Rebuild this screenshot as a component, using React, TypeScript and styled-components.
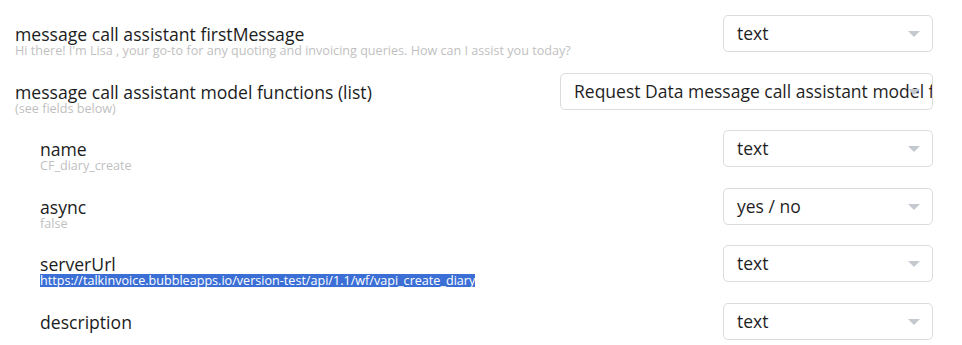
import React from 'react';
import styled, { createGlobalStyle } from 'styled-components';

const GlobalStyle = createGlobalStyle`
  body {
    margin: 0;
    background: #ffffff;
    font-family: 'Open Sans', 'Noto Sans', sans-serif;
    color: #1f1f1f;
  }
`;

interface Field {
  label: string;
  hint?: string;
  value: string;
  wide?: boolean;
  nested?: boolean;
  selected?: boolean;
}

const fields: Field[] = [
  {
    label: 'message call assistant firstMessage',
    hint: "Hi there! I'm Lisa , your go-to for any quoting and invoicing queries. How can I assist you today?",
    value: 'text',
  },
  {
    label: 'message call assistant model functions (list)',
    hint: '(see fields below)',
    value: 'Request Data message call assistant model functions',
    wide: true,
  },
  { label: 'name', hint: 'CF_diary_create', value: 'text', nested: true },
  { label: 'async', hint: 'false', value: 'yes / no', nested: true },
  {
    label: 'serverUrl',
    hint: 'https://talkinvoice.bubbleapps.io/version-test/api/1.1/wf/vapi_create_diary',
    value: 'text',
    nested: true,
    selected: true,
  },
  { label: 'description', value: 'text', nested: true },
];

const DropdownArrow = () => (
  <Arrow width="12" height="6" viewBox="0 0 12 6">
    <path d="M0 0 L12 0 L6 6 Z" fill="#c3c9cf" />
  </Arrow>
);

const App: React.FC = () => {
  return (
    <>
      <GlobalStyle />
      <Page>
        {fields.map((field) => (
          <Row key={field.label} nested={field.nested}>
            <LabelBlock>
              <Title>{field.label}</Title>
              {field.hint && (
                <Hint>
                  {field.selected ? <Selected>{field.hint}</Selected> : field.hint}
                </Hint>
              )}
            </LabelBlock>
            <Dropdown wide={field.wide}>
              <DropdownValue>{field.value}</DropdownValue>
              <DropdownArrow />
            </Dropdown>
          </Row>
        ))}
      </Page>
    </>
  );
};

const Page = styled.div`
  display: flex;
  flex-direction: column;
  gap: 20.5px;
  padding: 15px 29px 0 15px;
`;

const Row = styled.div<{ nested?: boolean }>`
  display: flex;
  justify-content: space-between;
  align-items: flex-start;
  height: 37px;
  padding-left: ${({ nested }) => (nested ? '25px' : '0')};
`;

const LabelBlock = styled.div`
  display: flex;
  flex-direction: column;
  padding-top: 9px;
  min-width: 0;
`;

const Title = styled.div`
  font-size: 17.6px;
  line-height: 20px;
  color: #1c1c1c;
  white-space: nowrap;
`;

const Hint = styled.div`
  font-size: 12.6px;
  line-height: 14px;
  color: #bfbfbf;
  white-space: nowrap;
`;

const Selected = styled.span`
  display: inline-block;
  line-height: 13px;
  background: #3b6fd6;
  color: #ffffff;
`;

const Dropdown = styled.div<{ wide?: boolean }>`
  position: relative;
  flex-shrink: 0;
  box-sizing: border-box;
  width: ${({ wide }) => (wide ? '373px' : '210px')};
  height: 37px;
  border: 1px solid #dcdcdc;
  border-radius: 5px;
  background: #ffffff;
  padding-left: 13px;
  overflow: hidden;
`;

const DropdownValue = styled.div`
  font-size: 17.5px;
  line-height: 35px;
  color: #1f1f1f;
  white-space: nowrap;
`;

const Arrow = styled.svg`
  position: absolute;
  right: 12px;
  top: 15px;
`;

export default App;
